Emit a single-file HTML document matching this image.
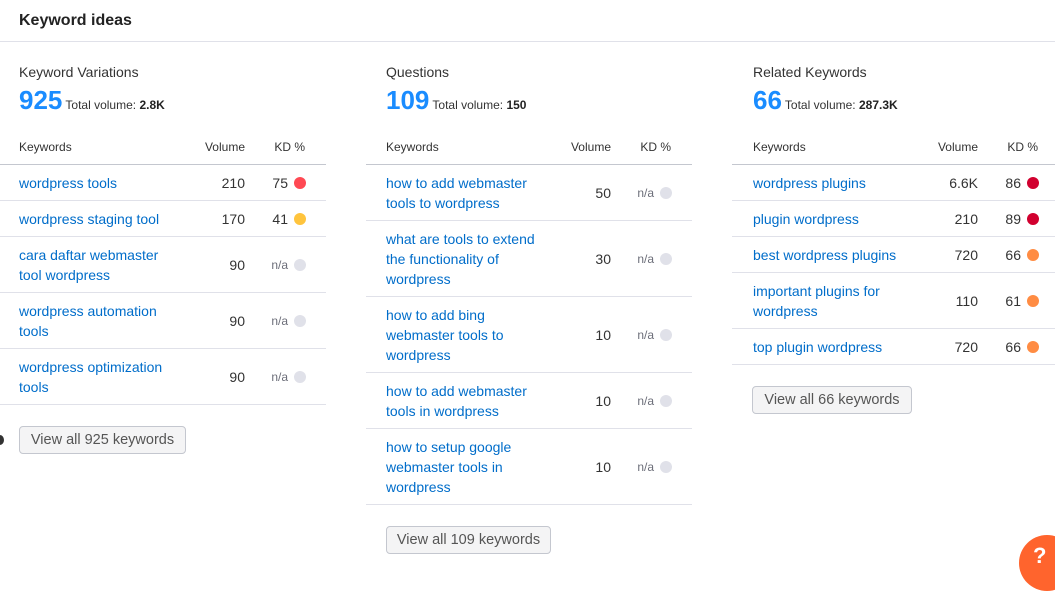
<!DOCTYPE html>
<html><head><meta charset="utf-8"><style>
*{box-sizing:border-box;margin:0;padding:0}
body{width:1055px;height:558px;overflow:hidden;background:#fff;font-family:"Liberation Sans",Arial,sans-serif;color:#333;position:relative}
.title{position:absolute;left:19px;top:12px;font-size:16px;font-weight:bold;color:#222}
.hline{position:absolute;left:0;top:41px;width:1055px;height:1px;background:#e0e1e9}
.col{position:absolute;top:64px}
.sec{font-size:14px;color:#333;margin-left:19px;height:18px}
.num{margin-left:19px;margin-top:3px;height:51px}
.num b{font-size:26px;color:#1a8cff;font-weight:bold}
.num span{font-size:12px;color:#333;margin-left:3px}
.num span strong{color:#222}
.row{display:grid;grid-template-columns:1fr 60px 61px;padding:8px 20px 7px 19px;border-bottom:1px solid #e0e1e9;align-items:center;font-size:14px;line-height:20px}
.hd{font-size:12px;color:#333;padding:3px 20px 9px 19px;border-bottom:1px solid #c4c7cf;line-height:16px}
.kw{color:#006dca;max-width:160px}
.vol{text-align:right}
.kd{display:flex;justify-content:flex-end;align-items:center;gap:6px}
.na{font-size:12px;color:#6c6e79}
.d{width:12px;height:12px;border-radius:50%;display:inline-block}
.btn{display:inline-block;margin-left:19px;margin-top:21px;border:1px solid #c4c7cf;border-radius:4px;background:#f4f4f5;color:#555;font-size:14.5px;padding:5px 9px;line-height:16px;width:167px;text-align:center}
</style></head><body>
<div class="title">Keyword ideas</div>
<div class="hline"></div>

<div class="col" style="left:0;width:326px">
<div class="sec">Keyword Variations</div>
<div class="num"><b>925</b><span>Total volume: <strong>2.8K</strong></span></div>
<div class="row hd"><div>Keywords</div><div class="vol">Volume</div><div class="kd" style="padding-right:1px">KD %</div></div>
<div class="row"><div class="kw">wordpress tools</div><div class="vol">210</div><div class="kd">75 <span class="d" style="background:#ff4953"></span></div></div>
<div class="row"><div class="kw" style="max-width:180px">wordpress staging tool</div><div class="vol">170</div><div class="kd">41 <span class="d" style="background:#ffc43d"></span></div></div>
<div class="row"><div class="kw" style="max-width:150px">cara daftar webmaster tool wordpress</div><div class="vol">90</div><div class="kd"><span class="na">n/a</span> <span class="d" style="background:#e0e1e9"></span></div></div>
<div class="row"><div class="kw" style="max-width:150px">wordpress automation tools</div><div class="vol">90</div><div class="kd"><span class="na">n/a</span> <span class="d" style="background:#e0e1e9"></span></div></div>
<div class="row"><div class="kw" style="max-width:155px">wordpress optimization tools</div><div class="vol">90</div><div class="kd"><span class="na">n/a</span> <span class="d" style="background:#e0e1e9"></span></div></div>
<div class="btn">View all 925 keywords</div>
</div>
<div style="position:absolute;left:-4px;top:435px;width:8px;height:10px;border-radius:50%;background:#333"></div>

<div class="col" style="left:366px;width:326px">
<div class="sec" style="margin-left:20px">Questions</div>
<div class="num" style="margin-left:20px"><b>109</b><span>Total volume: <strong>150</strong></span></div>
<div class="row hd" style="padding-left:20px"><div>Keywords</div><div class="vol">Volume</div><div class="kd" style="padding-right:1px">KD %</div></div>
<div class="row" style="padding-left:20px"><div class="kw" style="max-width:160px">how to add webmaster tools to wordpress</div><div class="vol">50</div><div class="kd"><span class="na">n/a</span> <span class="d" style="background:#e0e1e9"></span></div></div>
<div class="row" style="padding-left:20px"><div class="kw" style="max-width:165px">what are tools to extend the functionality of wordpress</div><div class="vol">30</div><div class="kd"><span class="na">n/a</span> <span class="d" style="background:#e0e1e9"></span></div></div>
<div class="row" style="padding-left:20px"><div class="kw" style="max-width:150px">how to add bing webmaster tools to wordpress</div><div class="vol">10</div><div class="kd"><span class="na">n/a</span> <span class="d" style="background:#e0e1e9"></span></div></div>
<div class="row" style="padding-left:20px"><div class="kw" style="max-width:160px">how to add webmaster tools in wordpress</div><div class="vol">10</div><div class="kd"><span class="na">n/a</span> <span class="d" style="background:#e0e1e9"></span></div></div>
<div class="row" style="padding-left:20px"><div class="kw" style="max-width:145px">how to setup google webmaster tools in wordpress</div><div class="vol">10</div><div class="kd"><span class="na">n/a</span> <span class="d" style="background:#e0e1e9"></span></div></div>
<div class="btn" style="margin-left:20px;width:165px">View all 109 keywords</div>
</div>

<div class="col" style="left:732px;width:323px">
<div class="sec" style="margin-left:21px">Related Keywords</div>
<div class="num" style="margin-left:21px"><b>66</b><span>Total volume: <strong>287.3K</strong></span></div>
<div class="row hd" style="padding:3px 16px 9px 21px"><div>Keywords</div><div class="vol">Volume</div><div class="kd" style="padding-right:1px">KD %</div></div>
<div class="row" style="padding-left:21px;padding-right:16px"><div class="kw">wordpress plugins</div><div class="vol">6.6K</div><div class="kd">86 <span class="d" style="background:#d1002f"></span></div></div>
<div class="row" style="padding-left:21px;padding-right:16px"><div class="kw">plugin wordpress</div><div class="vol">210</div><div class="kd">89 <span class="d" style="background:#d1002f"></span></div></div>
<div class="row" style="padding-left:21px;padding-right:16px"><div class="kw" style="max-width:180px">best wordpress plugins</div><div class="vol">720</div><div class="kd">66 <span class="d" style="background:#ff8c43"></span></div></div>
<div class="row" style="padding-left:21px;padding-right:16px"><div class="kw" style="max-width:160px">important plugins for wordpress</div><div class="vol">110</div><div class="kd">61 <span class="d" style="background:#ff8c43"></span></div></div>
<div class="row" style="padding-left:21px;padding-right:16px"><div class="kw">top plugin wordpress</div><div class="vol">720</div><div class="kd">66 <span class="d" style="background:#ff8c43"></span></div></div>
<div class="btn" style="margin-left:20px;width:160px">View all 66 keywords</div>
</div>

<div style="position:absolute;left:1019px;top:535px;width:56px;height:56px;border-radius:50%;background:#ff642d;color:#fff;font-weight:bold;font-size:22px;padding:8px 0 0 14px">?</div>
</body></html>
